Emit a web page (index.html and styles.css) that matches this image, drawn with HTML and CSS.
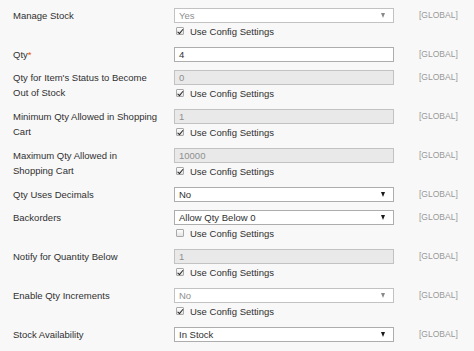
FILE: index.html
```html
<!DOCTYPE html>
<html>
<head>
<meta charset="utf-8">
<link rel="stylesheet" href="styles.css">
</head>
<body>
<div class="form">
  <div class="field">
    <div class="label">Manage Stock</div>
    <div class="control">
      <div class="box select disabled white"><span>Yes</span><span class="arrow"></span></div>
      <div class="use-config"><span class="cb checked"></span>Use Config Settings</div>
    </div>
    <div class="scope">[GLOBAL]</div>
  </div>
  <div class="field">
    <div class="label">Qty<span class="req">*</span></div>
    <div class="control">
      <div class="box"><span>4</span></div>
    </div>
    <div class="scope">[GLOBAL]</div>
  </div>
  <div class="field">
    <div class="label">Qty for Item's Status to Become Out of Stock</div>
    <div class="control">
      <div class="box disabled"><span>0</span></div>
      <div class="use-config"><span class="cb checked"></span>Use Config Settings</div>
    </div>
    <div class="scope">[GLOBAL]</div>
  </div>
  <div class="field">
    <div class="label">Minimum Qty Allowed in Shopping Cart</div>
    <div class="control">
      <div class="box disabled"><span>1</span></div>
      <div class="use-config"><span class="cb checked"></span>Use Config Settings</div>
    </div>
    <div class="scope">[GLOBAL]</div>
  </div>
  <div class="field">
    <div class="label">Maximum Qty Allowed in<br>Shopping Cart</div>
    <div class="control">
      <div class="box disabled"><span>10000</span></div>
      <div class="use-config"><span class="cb checked"></span>Use Config Settings</div>
    </div>
    <div class="scope">[GLOBAL]</div>
  </div>
  <div class="field">
    <div class="label">Qty Uses Decimals</div>
    <div class="control">
      <div class="box select"><span>No</span><span class="arrow"></span></div>
    </div>
    <div class="scope">[GLOBAL]</div>
  </div>
  <div class="field">
    <div class="label">Backorders</div>
    <div class="control">
      <div class="box select"><span>Allow Qty Below 0</span><span class="arrow"></span></div>
      <div class="use-config"><span class="cb"></span>Use Config Settings</div>
    </div>
    <div class="scope">[GLOBAL]</div>
  </div>
  <div class="field">
    <div class="label">Notify for Quantity Below</div>
    <div class="control">
      <div class="box disabled"><span>1</span></div>
      <div class="use-config"><span class="cb checked"></span>Use Config Settings</div>
    </div>
    <div class="scope">[GLOBAL]</div>
  </div>
  <div class="field">
    <div class="label">Enable Qty Increments</div>
    <div class="control">
      <div class="box select disabled white"><span>No</span><span class="arrow"></span></div>
      <div class="use-config"><span class="cb checked"></span>Use Config Settings</div>
    </div>
    <div class="scope">[GLOBAL]</div>
  </div>
  <div class="field">
    <div class="label">Stock Availability</div>
    <div class="control">
      <div class="box select"><span>In Stock</span><span class="arrow"></span></div>
    </div>
    <div class="scope">[GLOBAL]</div>
  </div>
</div>
</body>
</html>
```
FILE: styles.css
```css
html, body {
  margin: 0;
  padding: 0;
  background: #f8f8f8;
}
body {
  font-family: "Liberation Sans", Arial, sans-serif;
  color: #303030;
  font-size: 9.5px;
}
.form {
  padding: 8px 0 0 13px;
}
.field {
  display: grid;
  grid-template-columns: 161px 220px auto;
  margin-bottom: 8px;
}
.label {
  line-height: 15px;
  padding-right: 12px;
}
.req {
  color: #eb5202;
}
.box {
  box-sizing: border-box;
  height: 15px;
  border: 1px solid #adadad;
  background: #fff;
  padding: 0 4px;
  line-height: 13px;
  display: flex;
  align-items: center;
  justify-content: space-between;
  color: #303030;
}
.box.disabled {
  background: #e9e9e9;
  color: #8f8f8f;
  border-color: #c2c2c2;
}
.box.disabled.white {
  background: #fff;
}
.arrow {
  width: 0;
  height: 0;
  border-left: 2.5px solid transparent;
  border-right: 2.5px solid transparent;
  border-top: 5px solid #1a1a1a;
  margin-right: 4px;
}
.disabled .arrow {
  border-top-color: #8a8a8a;
}
.use-config {
  height: 16px;
  display: flex;
  align-items: center;
  padding-left: 2px;
  gap: 6px;
  color: #303030;
}
.cb {
  box-sizing: border-box;
  width: 8px;
  height: 8px;
  border: 1px solid #a8a8a8;
  border-radius: 1px;
  background: linear-gradient(#fdfdfd, #e4e4e4);
  position: relative;
}
.cb.checked::after {
  content: "";
  position: absolute;
  left: 1.5px;
  top: -0.5px;
  width: 2px;
  height: 4.5px;
  border-right: 1.6px solid #222;
  border-bottom: 1.6px solid #222;
  transform: rotate(40deg);
}
.scope {
  padding-left: 25px;
  font-size: 8.5px;
  line-height: 15px;
  color: #999;
}
```
